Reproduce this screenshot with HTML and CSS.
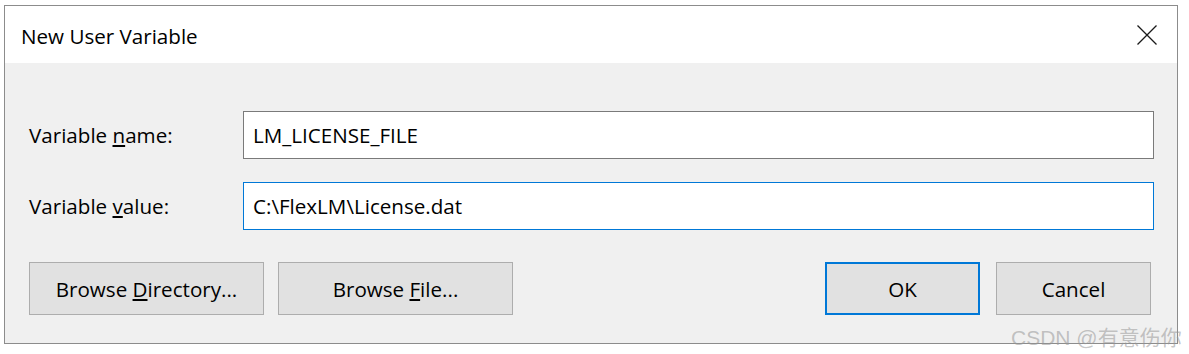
FILE: index.html
```html
<!DOCTYPE html>
<html>
<head>
<meta charset="utf-8" />
<title>New User Variable</title>
<link rel="stylesheet" href="styles.css">
</head>
<body>

<div class="dialog">
  <div class="titlebar">
    <span class="title">New User Variable</span>
    <svg class="close" width="20" height="20" viewBox="0 0 20 20">
      <path d="M0.5 0.5 L19.5 19.5 M19.5 0.5 L0.5 19.5" stroke="#1a1a1a" stroke-width="1.3" fill="none" />
    </svg>
  </div>

  <div class="content">
    <div class="row">
      <label class="label">Variable <u>n</u>ame:</label>
      <div class="field">LM_LICENSE_FILE</div>
    </div>
    <div class="row">
      <label class="label">Variable <u>v</u>alue:</label>
      <div class="field focused">C:\FlexLM\License.dat</div>
    </div>

    <div class="buttons">
      <button type="button" class="btn wide">Browse <u>D</u>irectory...</button>
      <button type="button" class="btn wide">Browse <u>F</u>ile...</button>
      <span class="spacer"></span>
      <button type="button" class="btn small default">OK</button>
      <button type="button" class="btn small">Cancel</button>
    </div>
  </div>
</div>

<div class="watermark">CSDN @有意伤你</div>

</body>
</html>
```

FILE: styles.css
```css
body
{
    margin: 0;
    background-color: #ffffff;
    font-family: "Open Sans", "Noto Sans", sans-serif;
    color: #000000;
}

.dialog
{
    box-sizing: border-box;
    width: 1174px;
    height: 339px;
    margin: 5px 0 0 4px;
    border: 1px solid #8c8c8c;
    background-color: #f0f0f0;
}

.titlebar
{
    height: 57px;
    background-color: #ffffff;
    display: flex;
    align-items: center;
    justify-content: space-between;
    padding: 0 20px 0 16px;
}

.title
{
    font-size: 20.6px;
    margin-top: 2px;
}

.close
{
    display: block;
    margin-top: 1px;
}

.content
{
    padding: 48px 23px 0 24px;
}

.row
{
    display: flex;
    align-items: center;
    margin-bottom: 23px;
}

.label
{
    width: 214px;
    font-size: 20.6px;
}

.field
{
    box-sizing: border-box;
    flex: 1;
    height: 48px;
    border: 1px solid #7a7a7a;
    background-color: #ffffff;
    font-size: 20.6px;
    padding: 0 9px;
    display: flex;
    align-items: center;
}

.field.focused
{
    border-color: #0078d7;
}

.buttons
{
    display: flex;
    padding-top: 9px;
    margin-right: 3px;
}

.spacer
{
    flex: 1;
}

.btn
{
    box-sizing: border-box;
    height: 53px;
    border: 1px solid #adadad;
    background-color: #e1e1e1;
    font-family: "Open Sans", "Noto Sans", sans-serif;
    font-size: 20.6px;
    color: #000000;
    padding: 0;
}

.btn.wide
{
    width: 235px;
    margin-right: 14px;
}

.btn.small
{
    width: 155px;
    margin-left: 16px;
}

.btn.default
{
    border: 2px solid #0078d7;
}

.watermark
{
    position: absolute;
    left: 1011px;
    top: 321px;
    font-family: "Liberation Sans", "Noto Sans CJK SC", sans-serif;
    font-size: 21px;
    color: rgba(150, 150, 150, 0.55);
    white-space: nowrap;
}
```
